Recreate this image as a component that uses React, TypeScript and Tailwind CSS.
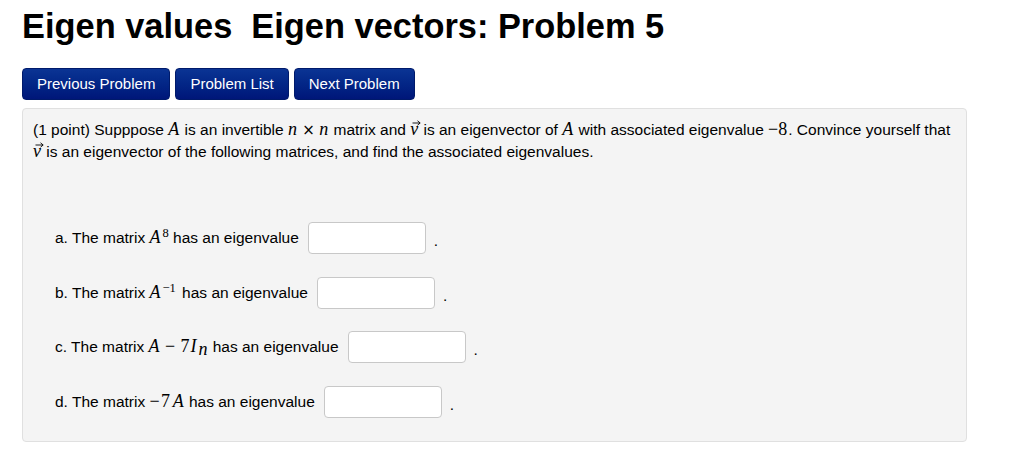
import React from "react";

const serif = '"Liberation Serif", "DejaVu Serif", serif';

const M = ({ children, className = "" }: { children: React.ReactNode; className?: string }) => (
  <span className={`italic text-[18px] leading-[1] pr-[1px] ${className}`} style={{ fontFamily: serif }}>{children}</span>
);
const R = ({ children, className = "" }: { children: React.ReactNode; className?: string }) => (
  <span className={`text-[18px] leading-[1] pr-[1px] ${className}`} style={{ fontFamily: serif }}>{children}</span>
);

const Vec = () => (
  <span className="relative inline-block">
    <M>v</M>
    <svg className="absolute left-[2px] top-[1px]" width="9" height="6" viewBox="0 0 9 6">
      <path d="M0.5 3 H8 M5.5 0.8 L8.2 3 L5.5 5.2" stroke="black" strokeWidth="0.9" fill="none" />
    </svg>
  </span>
);

const Btn = ({ label }: { label: string }) => (
  <button className="h-[32px] px-[14px] rounded-[4px] border border-[#001a6b] bg-gradient-to-b from-[#0b3494] to-[#001679] text-white text-[15px] leading-[20px]">
    {label}
  </button>
);

const Row = ({ label }: { label: React.ReactNode }) => (
  <div className="flex items-center h-[32px] text-[15.5px]">
    <span className="whitespace-pre">{label}</span>
    <div className="ml-[9px] w-[118px] h-[32px] rounded-[4px] border border-[#c8c8c8] bg-white" />
    <span className="ml-[8px] mt-[6px]">.</span>
  </div>
);

export default function App() {
  return (
    <div className="bg-white w-[1024px] h-[459px] text-black" style={{ fontFamily: '"Liberation Sans", Arial, sans-serif' }}>
      <div className="pl-[22px] pr-[57px]">
        <h1 className="font-bold text-[34.4px] leading-[38px] pt-[7px] whitespace-pre">Eigen values  Eigen vectors: Problem 5</h1>
        <div className="flex gap-[5px] mt-[23px]">
          <Btn label="Previous Problem" />
          <Btn label="Problem List" />
          <Btn label="Next Problem" />
        </div>
        <div className="mt-[8px] bg-[#f4f4f4] border border-[#e0e0e0] rounded-[4px] pl-[10px] pr-[10px] pt-[10px] pb-[25px] h-[334px]">
          <p className="text-[15.5px] leading-[22px]">
            (1 point) Supppose <M>A</M> is an invertible <M>n</M> <span style={{ fontFamily: '"DejaVu Sans", sans-serif' }} className="text-[15px]">×</span> <M>n</M> matrix and <Vec /> is an eigenvector of <M>A</M> with associated eigenvalue <R>−8</R>. Convince yourself that
            <br />
            <Vec /> is an eigenvector of the following matrices, and find the associated eigenvalues.
          </p>
          <div className="pl-[22px] mt-[59px] flex flex-col gap-[22.5px]">
            <Row label={<>a. The matrix <M>A</M><sup className="text-[12.5px] ml-[1px]" style={{ fontFamily: serif }}>8</sup> has an eigenvalue</>} />
            <Row label={<>b. The matrix <M>A</M><sup className="text-[12.5px] ml-[1px] pr-[2px]" style={{ fontFamily: serif }}>−1</sup> has an eigenvalue</>} />
            <Row label={<>c. The matrix <M>A</M> <R>−</R> <R>7</R><M>I</M><sub className="ml-[1px]"><M className="text-[12.5px]">n</M></sub> has an eigenvalue</>} />
            <Row label={<>d. The matrix <R className="tracking-[1.5px]">−7</R><M>A</M> has an eigenvalue</>} />
          </div>
        </div>
      </div>
    </div>
  );
}
